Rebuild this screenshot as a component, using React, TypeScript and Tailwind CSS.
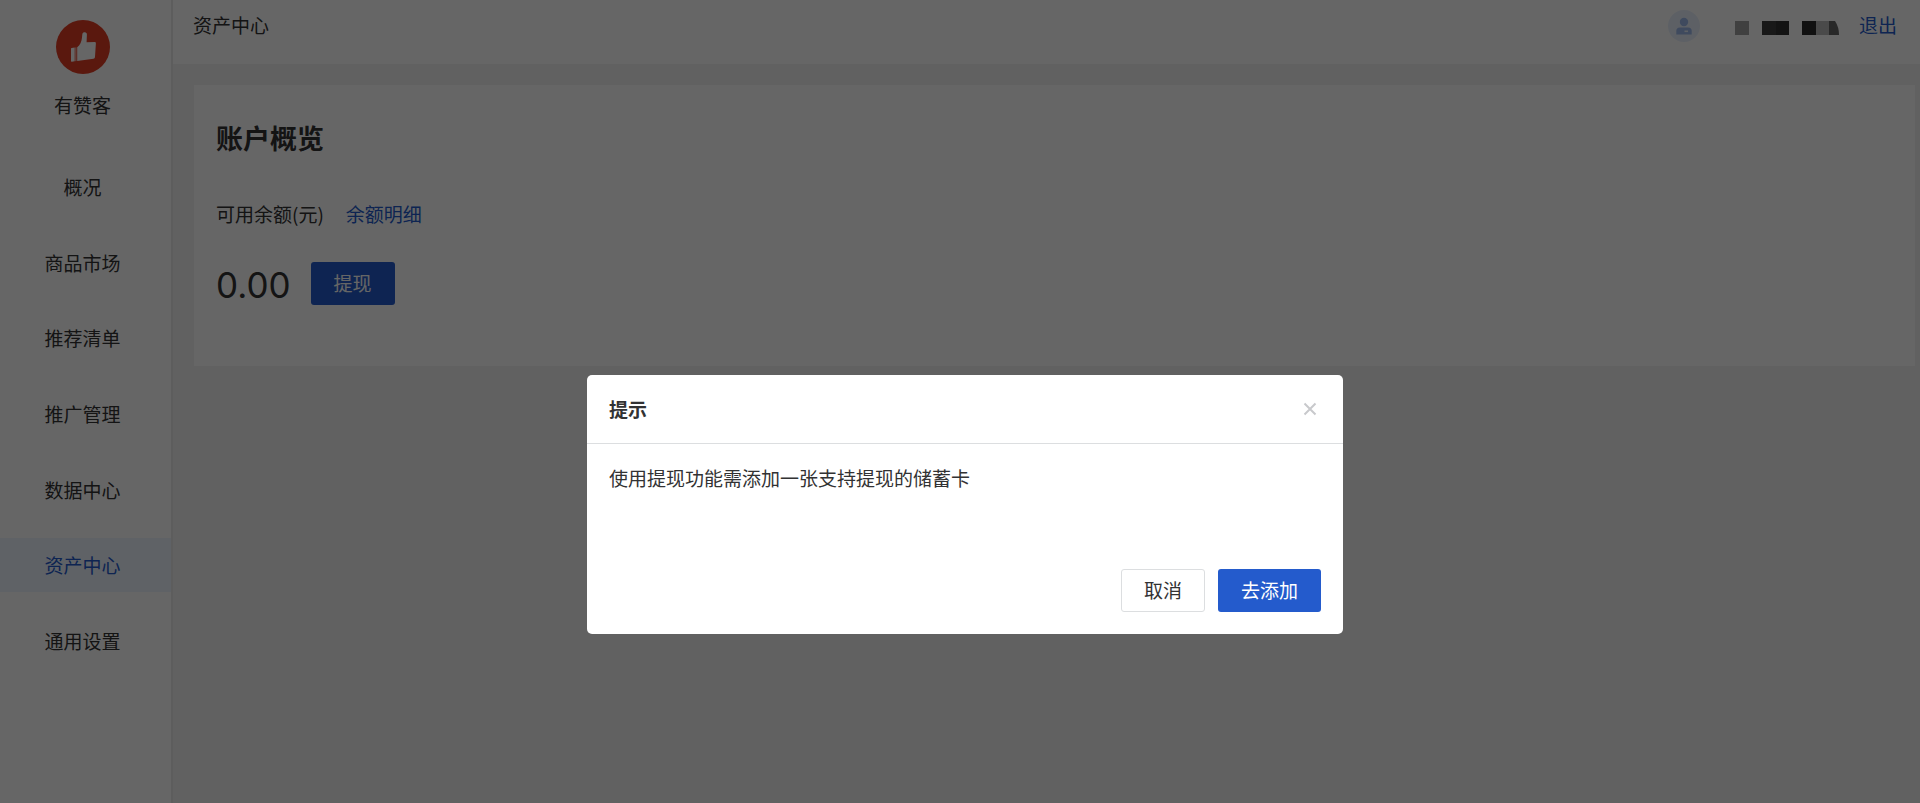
const NAV_ITEMS = ["概况", "商品市场", "推荐清单", "推广管理", "数据中心", "资产中心", "通用设置"];
const ACTIVE_ITEM = "资产中心";

const Logo = () => (
  <svg viewBox="0 0 54 54" className="size-[54px]" aria-hidden="true">
    <circle cx="27" cy="27" r="27" fill="#e03c24" />
    <path
      fill="#fff"
      d="M15 28.600Q15 28 15.600 27.900L18.700 27.500V41.300L15.800 41.700Q15 41.800 15 41ZM19.500 27.400L20.300 27.300V41.100L19.500 41.200ZM21.200 27.200C24 25.500 25.600 21.500 26 17.500C26.200 15.500 26.200 14 26.600 13.200C27 12.300 28 12.100 28.900 12.300C30.100 12.500 30.900 13.200 30.900 14.500C30.900 17 30.600 19.500 30.600 22.300L38.700 21.900Q40 21.900 39.900 23.200L39 37Q38.900 38.500 37.500 38.700L21.200 41Z"
    />
  </svg>
);

const Avatar = () => (
  <svg viewBox="0 0 32 32" className="size-8" aria-hidden="true">
    <circle cx="16" cy="16" r="16" fill="#e9f1fd" />
    <circle cx="16" cy="12" r="4.2" fill="#9db9ea" />
    <path fill="#9db9ea" d="M8.300 24.500v-3.500q0-3.500 3.500-3.500h8.400q3.500 0 3.500 3.500v3.500z" />
    <path fill="#e9f1fd" d="M16.500 20.500h3.500v1.600h-3.500z" />
  </svg>
);

// account name, masked out
const MaskedName = () => (
  <svg viewBox="0 0 104 16" className="h-4 w-[104px]" aria-hidden="true">
    <path fill="#a0a0a0" d="M0 1h14v14H0z" />
    <path fill="#3c3c3c" d="M27 1h14v14H27z" />
    <path fill="#303030" d="M41 1h13v14H41z" />
    <path fill="#2c2c2c" d="M67 1h14v14H67z" />
    <path fill="#bababa" d="M81 1h13v14H81z" />
    <path fill="#646464" d="M94 1h6q4 6 4 14H94z" />
  </svg>
);

const Sidebar = () => (
  <aside className="flex w-[173px] shrink-0 flex-col border-r-2 border-[#e8e8e8] bg-white pt-5">
    <div className="flex flex-col items-center pr-[6px]">
      <Logo />
      <p className="mt-[15px] leading-8">有赞客</p>
    </div>
    <nav className="mt-[39px] flex h-[508px] flex-col justify-between">
      {NAV_ITEMS.map((item) => (
        <a
          key={item}
          href="#"
          className={
            item === ACTIVE_ITEM
              ? "block bg-[#edf4ff] pr-[6px] text-center leading-[54px] text-[#245bcc]"
              : "block pr-[6px] text-center leading-[54px]"
          }
        >
          {item}
        </a>
      ))}
    </nav>
  </aside>
);

const Header = () => (
  <header className="flex h-16 items-start bg-white pt-[10px] pr-[23px] pl-5">
    <h1 className="flex-1 leading-[30px]">资产中心</h1>
    <Avatar />
    <div className="mt-[10px] ml-[35px]">
      <MaskedName />
    </div>
    <a href="#" className="ml-5 leading-[30px] text-[#245bcc]">
      退出
    </a>
  </header>
);

const AccountCard = () => (
  <section className="mt-[21px] mr-[5px] ml-[21px] bg-white px-[22px] pt-8 pb-[61px]">
    <h2 className="text-[27px] leading-[42px] font-bold">账户概览</h2>
    <div className="mt-[39px] flex gap-[22px] leading-8">
      <span>可用余额(元)</span>
      <a href="#" className="text-[#245bcc]">
        余额明细
      </a>
    </div>
    <div className="mt-8 flex items-center gap-5">
      <span className="pt-1 font-[Inter,sans-serif] text-[35px] leading-[39px]">0.00</span>
      <button type="button" className="h-[43px] w-[84px] rounded-[3px] bg-[#245bcc] text-white">
        提现
      </button>
    </div>
  </section>
);

const TipDialog = () => (
  <div className="fixed inset-0 flex items-start justify-center bg-black/60 pt-[375px] pl-[10px]">
    <div
      role="dialog"
      aria-modal="true"
      aria-labelledby="tip-title"
      className="w-[756px] rounded-[5px] bg-white"
    >
      <div className="flex h-[69px] items-center justify-between border-b border-[#dcdee0] px-[22px]">
        <h3 id="tip-title" className="font-bold">
          提示
        </h3>
        <button type="button" aria-label="关闭" className="p-1 text-[#c8c9cc]">
          <svg viewBox="0 0 14 14" className="size-[14px]" fill="none" stroke="currentColor" strokeWidth="2">
            <path d="M1.500 1.500l11 11M12.500 1.500l-11 11" />
          </svg>
        </button>
      </div>
      <p className="px-[22px] pt-[18px] leading-8">使用提现功能需添加一张支持提现的储蓄卡</p>
      <div className="mt-[75px] flex justify-end gap-[13px] px-[22px] pb-[22px]">
        <button type="button" className="h-[43px] w-[84px] rounded-[3px] border border-[#dcdee0] bg-white">
          取消
        </button>
        <button type="button" className="h-[43px] w-[103px] rounded-[3px] bg-[#245bcc] text-white">
          去添加
        </button>
      </div>
    </div>
  </div>
);

export default function App() {
  return (
    <div className="flex min-h-screen bg-[#f2f2f2] font-['Noto_Sans_CJK_SC',sans-serif] text-[19px] text-[#323233]">
      <Sidebar />
      <main className="min-w-0 flex-1">
        <Header />
        <AccountCard />
      </main>
      <TipDialog />
    </div>
  );
}
